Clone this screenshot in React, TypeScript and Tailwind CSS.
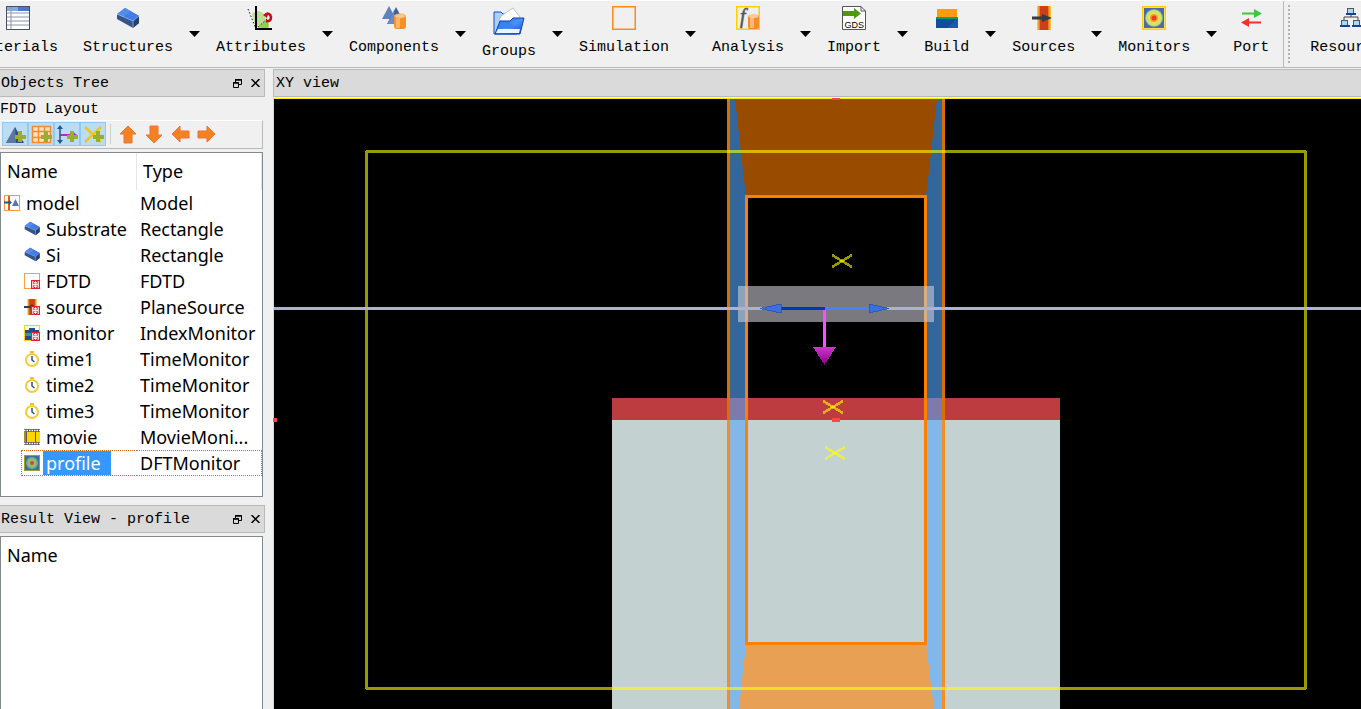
import { useState, type ReactNode } from 'react'

const mono = "font-['Liberation_Mono','Noto_Sans_CJK_SC',monospace] text-[15px] leading-5"
const sans = "font-['Noto_Sans','Noto_Sans_CJK_SC',sans-serif] text-[18px] leading-6"

function BlockShape() {
  return (
    <>
      <path d="M1 8 L9 1 L23 9 L23 16 L17 21 L1 12Z" fill="#35548c" />
      <path d="M1 7 L9 1 L23 9 L17 14Z" fill="#3f7de8" />
      <path d="M1 7 L9 1 L15 4 L7 10Z" fill="#6a9cf0" opacity="0.5" />
      <path d="M17 14 L23 9 L23 16 L17 21Z" fill="#24406f" />
      <path d="M1 7 L17 14 L17 21 M17 14 L23 9" fill="none" stroke="#a9c3ee" strokeWidth="0.7" />
    </>
  )
}

function MaterialsIcon() {
  return (
    <svg width="24" height="24" viewBox="0 0 24 24">
      <rect x="0.5" y="0.5" width="23" height="23" fill="#fff" stroke="#4b5058" />
      <rect x="1" y="1" width="22" height="4" fill="#4a78d0" />
      <rect x="1" y="1" width="11" height="4" fill="#9dbdf3" opacity="0.7" />
      <path d="M1 7h22M1 11h22M1 15h22M1 19h22" stroke="#c6cad6" strokeWidth="2" />
      <path d="M5 1v22" stroke="#8d949f" strokeWidth="1" />
    </svg>
  )
}

function StructuresIcon() {
  return <svg width="24" height="24" viewBox="0 0 24 22"><BlockShape /></svg>
}

function AttributesIcon() {
  return (
    <svg width="24" height="24" viewBox="0 0 24 24" className="overflow-visible">
      <path d="M3 8 Q9 2 15 8 L19 21 H7Z" fill="#bfdc95" />
      <path d="M8 23 L18 13 Q21 18 19 23Z" fill="#8fd04f" />
      <path d="M-1 3 L7 23 L19 12" fill="none" stroke="#111" strokeWidth="1" strokeDasharray="1.5 2" />
      <path d="M7 0V23H23" fill="none" stroke="#000" strokeWidth="2" />
      <path d="M16 9 Q21 6 22 11 Q22 16 17 15" fill="none" stroke="#c80f18" strokeWidth="2.6" />
      <path d="M14 9 L19 6 L18 12Z" fill="#c80f18" />
    </svg>
  )
}

function ComponentsIcon() {
  return (
    <svg width="24" height="24" viewBox="0 0 24 24">
      <path d="M0 13 L7 0 L14 13Z" fill="#5d82bd" />
      <path d="M5 18 L14 1 L23 18Z" fill="#3e619b" />
      <path d="M5 18 L12 5 L14 18Z" fill="#6a8cc5" />
      <rect x="12" y="9" width="12" height="14" rx="3" fill="#f8902a" />
      <rect x="14" y="10" width="4" height="12" fill="#ffb56a" />
      <ellipse cx="18" cy="10" rx="5.5" ry="2.2" fill="#ffc98f" stroke="#f59a40" strokeWidth="0.6" />
    </svg>
  )
}

function GroupsIcon() {
  return (
    <svg width="32" height="32" viewBox="0 0 32 32" className="overflow-visible">
      <defs>
        <linearGradient id="folder" x1="0" y1="0" x2="1" y2="1">
          <stop offset="0" stopColor="#1b5fe0" />
          <stop offset="0.5" stopColor="#4d93f5" />
          <stop offset="1" stopColor="#0d4bcb" />
        </linearGradient>
      </defs>
      <path d="M1 32 V10 H8 L10 12 H24 V32Z" fill="#a9d2fb" stroke="#0f50cc" />
      <path d="M6 19 L8 14 L20 6 L27 15 L24 20Z" fill="#fff" stroke="#a9b1c4" strokeWidth="0.8" />
      <path d="M2 32 L7 19 H17 L20 16 H31 L27 32Z" fill="url(#folder)" stroke="#0a42b8" />
      <path d="M7 20 H17 L22 25 L6 27Z" fill="#3a82f2" />
      <path d="M5 27 H27 L26 31 H3Z" fill="#eef4ff" />
    </svg>
  )
}

function SimulationIcon() {
  return <svg width="24" height="24"><rect x="0.75" y="0.75" width="22.5" height="22.5" fill="none" stroke="#ff8a1c" strokeWidth="1.5" /></svg>
}

function AnalysisIcon() {
  return (
    <svg width="24" height="24" viewBox="0 0 24 24">
      <rect x="0.75" y="0.75" width="22.5" height="22.5" fill="#eeeeea" stroke="#ffd000" strokeWidth="1.5" />
      <text x="4" y="17" fontFamily="Liberation Serif, serif" fontStyle="italic" fontSize="20" fill="#555" stroke="#555" strokeWidth="0.5">f</text>
      <rect x="12" y="9" width="11" height="14" rx="2" fill="#f68b2c" />
      <rect x="14" y="10" width="4" height="12" fill="#ffb878" />
      <ellipse cx="17.5" cy="10" rx="5" ry="2" fill="#ffc796" />
    </svg>
  )
}

function ImportIcon() {
  return (
    <svg width="24" height="24" viewBox="0 0 24 24">
      <path d="M0.5 0.5H19L23.5 5V23.5H0.5Z" fill="#fff" stroke="#555" />
      <path d="M19 0.5V5H23.5" fill="none" stroke="#555" />
      <path d="M1 5H12V2L19 7.5L12 13V10H1Z" fill="#4e9a06" />
      <text x="2.5" y="22" fontFamily="Liberation Sans, sans-serif" fontSize="9" fill="#000">GDS</text>
    </svg>
  )
}

function BuildIcon() {
  return (
    <svg width="24" height="24" viewBox="0 0 24 24">
      <rect x="2" y="3" width="20" height="9" fill="#fd9d0a" />
      <rect x="1" y="12" width="22" height="10" fill="#104c9f" />
      <path d="M23 12V22H12Z" fill="#2a63b2" opacity="0.6" />
      <rect x="1" y="11" width="22" height="2" fill="#109a76" />
    </svg>
  )
}

function SourceShape() {
  return (
    <>
      <rect x="5" y="0" width="14" height="24" fill="#f9c531" />
      <rect x="6.5" y="0" width="11" height="24" fill="#ef7b22" />
      <rect x="8" y="0" width="8" height="24" fill="#cf3f16" />
      <path d="M0 10.5H10V8L20 12L10 16V13.5H0Z" fill="#333b42" />
    </>
  )
}

function SourcesIcon() {
  return <svg width="24" height="24" viewBox="0 0 24 24"><SourceShape /></svg>
}

function MonitorsIcon() {
  return (
    <svg width="24" height="24" viewBox="0 0 24 24">
      <rect x="0.75" y="0.75" width="22.5" height="22.5" fill="#fff2b0" stroke="#ffcc00" strokeWidth="1.5" />
      <rect x="2" y="2" width="20" height="20" fill="#5068a8" />
      <circle cx="12" cy="12" r="9" fill="#78b8a0" />
      <circle cx="12" cy="12" r="8" fill="#cfe36a" />
      <circle cx="12" cy="12" r="5" fill="#f4e04a" />
      <circle cx="12" cy="12" r="4" fill="#f89b2c" />
      <circle cx="12" cy="12" r="2.5" fill="#e8401c" />
    </svg>
  )
}

function PortIcon() {
  return (
    <svg width="24" height="24" viewBox="0 0 24 24">
      <path d="M3 6.5H15V3L23 7.5L15 12V8.5H3Z" fill="#3fc63f" />
      <path d="M22 15.5H10V12L2 16.5L10 21V17.5H22Z" fill="#fb2c2c" />
    </svg>
  )
}

function ResourcesIcon() {
  return (
    <svg width="24" height="24" viewBox="0 0 24 24" className="overflow-visible">
      <path d="M12 8V11M5 14V11H19V14" fill="none" stroke="#444" />
      <rect x="8.5" y="2.5" width="6" height="5" fill="#a9d8fb" stroke="#555" />
      <rect x="7" y="7" width="10" height="2" fill="#15438f" />
      <rect x="2.5" y="14.5" width="6" height="5" fill="#a9d8fb" stroke="#555" />
      <rect x="1" y="19" width="10" height="2" fill="#15438f" />
      <rect x="14.5" y="14.5" width="6" height="5" fill="#a9d8fb" stroke="#555" />
      <rect x="13" y="19" width="10" height="2" fill="#15438f" />
    </svg>
  )
}

const tools = [
  { label: 'Structures', icon: <StructuresIcon /> },
  { label: 'Attributes', icon: <AttributesIcon /> },
  { label: 'Components', icon: <ComponentsIcon /> },
  { label: 'Groups', icon: <GroupsIcon /> },
  { label: 'Simulation', icon: <SimulationIcon /> },
  { label: 'Analysis', icon: <AnalysisIcon /> },
  { label: 'Import', icon: <ImportIcon /> },
  { label: 'Build', icon: <BuildIcon /> },
  { label: 'Sources', icon: <SourcesIcon /> },
  { label: 'Monitors', icon: <MonitorsIcon /> },
]

function ToolButton({ label, icon }: { label: string; icon: ReactNode }) {
  return (
    <button className="flex flex-col items-center justify-center gap-2 px-3 pb-1">
      {icon}
      <span>{label}</span>
    </button>
  )
}

function MainToolbar() {
  return (
    <header className={`${mono} flex h-[68px] overflow-hidden border-t border-b border-t-white border-b-[#b9b9b9] bg-[#f0f0f0]`}>
      <div className="-ml-[35px] flex shrink-0 border-r border-[#b9b9b9] pr-0.5">
        <div className="mr-px flex">
          <ToolButton label="Materials" icon={<MaterialsIcon />} />
        </div>
        {tools.map((tool) => (
          <div key={tool.label} className="flex">
            <ToolButton label={tool.label} icon={tool.icon} />
            <button aria-label={`${tool.label} menu`} className="flex w-[19px] items-center justify-center">
              <svg width="11" height="6"><path d="M0 0H11L5.5 6Z" fill="#000" /></svg>
            </button>
          </div>
        ))}
        <ToolButton label="Port" icon={<PortIcon />} />
      </div>
      <div className="flex shrink-0">
        <div className="my-1 ml-1 w-0 border-l-2 border-dotted border-[#b4b4b4]" />
        <div className="flex pl-2">
          <ToolButton label="Resources" icon={<ResourcesIcon />} />
        </div>
      </div>
    </header>
  )
}

function DockTitle({ title }: { title: string }) {
  return (
    <div className={`${mono} flex h-7 items-center border border-l-0 border-[#b9b9b9] bg-[#dadada] pl-px`}>
      <h2 className="flex-1 pt-0.5 whitespace-pre">{title}</h2>
      <button aria-label={`Float ${title}`} className="flex w-[18px] justify-center">
        <svg width="9" height="9" viewBox="0 0 9 9">
          <path d="M2.5 3V0.5H8.5V5.5H6" fill="none" stroke="#000" />
          <path d="M0.5 3.5H5.5V8.5H0.5Z" fill="none" stroke="#000" />
          <path d="M2 1H9M0 4H6" stroke="#000" strokeWidth="1.5" />
        </svg>
      </button>
      <button aria-label={`Close ${title}`} className="flex w-[18px] justify-center">
        <svg width="9" height="8" viewBox="0 0 9 8"><path d="M0.5 0L8.5 8M8.5 0L0.5 8" stroke="#000" strokeWidth="1.5" /></svg>
      </button>
    </div>
  )
}

function Plus() {
  return <path d="M17 8V19M12 14H23" stroke="#9aae2e" strokeWidth="4" />
}

const filters = [
  {
    label: 'Show structures',
    icon: <><path d="M3 20L12 4L21 20Z" fill="#34507c" /><path d="M3 20L12 4L13 20Z" fill="#5878a8" /></>,
  },
  {
    label: 'Show simulation',
    icon: (
      <>
        <rect x="3" y="3" width="18" height="16" fill="#ffe2bd" />
        <path d="M3.5 3.5H21.5V19.5H3.5ZM9.5 3V20M15.5 3V20M3 8.5H22M3 14.5H22" fill="none" stroke="#f58a2a" strokeWidth="1.5" />
      </>
    ),
  },
  {
    label: 'Show sources',
    icon: (
      <>
        <path d="M5 4V20M5 12H8" stroke="#28568c" strokeWidth="1.5" />
        <path d="M2 6L5 2L8 6ZM2 17L5 21L8 17Z" fill="#28568c" />
        <path d="M6 12H20" stroke="#c020d0" strokeWidth="2" />
        <path d="M17 8L22 12L17 16Z" fill="#c020d0" />
      </>
    ),
  },
  { label: 'Show monitors', icon: <path d="M4 4L20 19M20 4L4 19" stroke="#ecc71c" strokeWidth="2.5" /> },
]

const moves = [
  { label: 'Move up', path: 'M9 1L17 9H13V18H5V9H1Z' },
  { label: 'Move down', path: 'M9 18L17 10H13V1H5V10H1Z' },
  { label: 'Move left', path: 'M1 9L9 1V6H18V13H9V17Z' },
  { label: 'Move right', path: 'M18 9L10 1V6H1V13H10V17Z' },
]

function TreeToolbar() {
  return (
    <div className="mr-0.5 flex h-[29px] items-start border-t border-r border-b border-t-white border-r-[#b9b9b9] border-b-[#b9b9b9] pt-px pl-0.5">
      {filters.map((f) => (
        <button key={f.label} aria-label={f.label} aria-pressed="true" className="flex h-6 w-[26px] items-center justify-center border border-[#90c8f6] bg-[#bbdcf3]">
          <svg width="24" height="22" viewBox="0 0 24 22">{f.icon}<Plus /></svg>
        </button>
      ))}
      <div className="mx-1 mt-0.5 h-5 w-px bg-[#cfcfcf]" />
      {moves.map((m) => (
        <button key={m.label} aria-label={m.label} className="flex h-6 w-[26px] items-center justify-center">
          <svg width="19" height="19"><path d={m.path} fill="#f58220" stroke="#f2703c" strokeLinejoin="round" /></svg>
        </button>
      ))}
    </div>
  )
}

function RedBadge() {
  return (
    <g>
      <rect x="7" y="7" width="9" height="9" fill="#e4202c" />
      <path d="M9.5 8.5H8.5V14.5H9.5M13.5 8.5H14.5V14.5H13.5M11.5 8V15M9 11.5H14M10 9.5H13V13.5H10Z" fill="none" stroke="#fff" strokeWidth="0.8" />
    </g>
  )
}

const iconShapes: Record<string, ReactNode> = {
  model: (
    <>
      <rect x="0.5" y="0.5" width="15" height="15" fill="#fff" stroke="#f9964a" />
      <rect x="4" y="1" width="2" height="14" fill="#e85a1c" />
      <path d="M0 7.5H6" stroke="#1f5a80" strokeWidth="2" />
      <path d="M5 5L8 7.5L5 10Z" fill="#1f5a80" />
      <path d="M8 11L11.5 4L15 11Z" fill="#5278b8" />
    </>
  ),
  block: <g transform="scale(0.68)"><BlockShape /></g>,
  fdtd: <><rect x="0.5" y="0.5" width="15" height="15" fill="#fff" stroke="#ff9c48" /><RedBadge /></>,
  source: <><g transform="scale(0.67)"><SourceShape /></g><RedBadge /></>,
  index: (
    <>
      <rect x="0.5" y="0.5" width="15" height="15" fill="#fff8d8" stroke="#ffd21c" />
      <path d="M1 5H5V3H11V5H15V8H1Z" fill="#234d8c" />
      <rect x="1" y="8" width="14" height="3" fill="#2aa08c" />
      <rect x="1" y="11" width="14" height="4" fill="#234d8c" />
      <RedBadge />
    </>
  ),
  time: (
    <>
      <rect x="6" y="0" width="4" height="2" fill="#f0c22c" />
      <circle cx="8" cy="9" r="6" fill="#fff" stroke="#f5cb38" strokeWidth="2" />
      <path d="M8 5V9L10.5 11" fill="none" stroke="#35506f" strokeWidth="1.5" />
    </>
  ),
  movie: (
    <>
      <rect x="0" y="0" width="16" height="16" fill="#5d5a55" />
      <path d="M0 1.5H16M0 14.5H16" stroke="#fff" strokeWidth="1.5" strokeDasharray="1.5 1" />
      <rect x="3" y="3" width="8" height="10" fill="#ffd500" />
      <rect x="12" y="3" width="4" height="10" fill="#ffd500" />
      <rect x="0" y="3" width="2" height="10" fill="#a38c2c" />
    </>
  ),
  profile: (
    <>
      <rect x="0.5" y="0.5" width="15" height="15" fill="#3c6ea4" stroke="#a09c3c" />
      <circle cx="8" cy="8" r="6" fill="#6cae90" />
      <circle cx="8" cy="8" r="4.5" fill="#94bb78" />
      <circle cx="8" cy="8" r="2" fill="#cc4c34" />
    </>
  ),
}

const rows = [
  { name: 'model', type: 'Model', icon: 'model' },
  { name: 'Substrate', type: 'Rectangle', icon: 'block' },
  { name: 'Si', type: 'Rectangle', icon: 'block' },
  { name: 'FDTD', type: 'FDTD', icon: 'fdtd' },
  { name: 'source', type: 'PlaneSource', icon: 'source' },
  { name: 'monitor', type: 'IndexMonitor', icon: 'index' },
  { name: 'time1', type: 'TimeMonitor', icon: 'time' },
  { name: 'time2', type: 'TimeMonitor', icon: 'time' },
  { name: 'time3', type: 'TimeMonitor', icon: 'time' },
  { name: 'movie', type: 'MovieMoni...', icon: 'movie' },
  { name: 'profile', type: 'DFTMonitor', icon: 'profile' },
]

function ObjectsTree({ selected, onSelect }: { selected: string; onSelect: (name: string) => void }) {
  return (
    <div className={`${sans} mt-[3px] mr-0.5 h-[345px] overflow-hidden border border-[#828790] bg-white`}>
      <table className="w-full table-fixed border-separate border-spacing-0 text-left">
        <thead>
          <tr className="h-[37px]">
            <th className="w-[136px] border-r border-[#e5e5e5] p-0 pb-0.5 pl-1.5 font-normal">Name</th>
            <th className="border-r border-[#e5e5e5] p-0 pb-0.5 pl-1.5 font-normal">Type</th>
          </tr>
        </thead>
        <tbody>
          {rows.map((row, i) => {
            const active = row.name === selected
            const line = active ? 'border-[#d0701c]' : 'border-transparent'
            return (
              <tr key={row.name} onClick={() => onSelect(row.name)}>
                <td className={i === 0 ? 'p-0' : 'p-0 pl-5'}>
                  <div className={`${line} flex h-[26px] items-center border border-r-0 border-dotted pl-0.5`}>
                    <svg width="16" height="16" viewBox="0 0 16 16" className="shrink-0">{iconShapes[row.icon]}</svg>
                    <span className={`${active ? 'bg-[#3399ff] pr-2.5 text-white' : ''} ml-[3px] pl-[3px]`}>{row.name}</span>
                  </div>
                </td>
                <td className="p-0">
                  <div className={`${line} h-[26px] border border-l-0 border-dotted pl-[3px]`}>{row.type}</div>
                </td>
              </tr>
            )
          })}
        </tbody>
      </table>
    </div>
  )
}

function Cross({ x, y }: { x: number; y: number }) {
  return (
    <g stroke="#ffff00" strokeOpacity="0.6" strokeWidth="2.5">
      <path d={`M${x - 10} ${y - 6}L${x + 10} ${y + 6}`} />
      <path d={`M${x - 10} ${y + 6}L${x + 10} ${y - 6}`} />
    </g>
  )
}

function LayoutView() {
  return (
    <svg className="block h-full w-full bg-black" viewBox="273 98 1088 611" preserveAspectRatio="xMidYMin slice" role="img" aria-label="XY layout" shapeRendering="crispEdges">
      <defs>
        <linearGradient id="down" x1="0" y1="0" x2="0" y2="1">
          <stop offset="0" stopColor="#cc38cc" />
          <stop offset="1" stopColor="#850085" />
        </linearGradient>
      </defs>
      {/* substrate and silicon layer */}
      <rect x="612" y="420" width="448" height="289" fill="#c4d1d1" />
      <rect x="612" y="398" width="448" height="22" fill="#bc3c40" />

      {/* simulation boundaries */}
      <path d="M730 99H942V398H730Z" fill="#33679b" />
      <path d="M730 398H942V420H730Z" fill="#7f7aad" />
      <path d="M730 420H942V709H730Z" fill="#82b7ea" />
      <path d="M735 99H937L926 197H746Z" fill="#994c00" />
      <path d="M746 644H926L934 709H739Z" fill="#e8a055" />
      <rect x="746" y="197" width="180" height="201" fill="#000" />
      <rect x="746" y="398" width="180" height="22" fill="#bc3c40" />
      <rect x="746" y="420" width="180" height="223" fill="#c4d1d1" />
      <path d="M728.5 99V709M943.5 99V709" stroke="#d97000" strokeWidth="3" />
      <path d="M728.5 420V709M943.5 420V709" stroke="#f68c24" strokeWidth="3" />
      <rect x="746.5" y="196.5" width="179" height="447" fill="none" stroke="#ff8000" strokeWidth="3" />

      {/* monitor region */}
      <rect x="366.5" y="151.5" width="939" height="537" rx="1" fill="none" stroke="#ffff00" strokeOpacity="0.6" strokeWidth="3" />
      <Cross x={842} y={261} />
      <Cross x={833} y={407} />
      <Cross x={835} y={453} />

      {/* plane source */}
      <rect x="738" y="286" width="196" height="36" fill="#cacad4" fillOpacity="0.6" />
      <rect x="274" y="307" width="1087" height="3" fill="#b0b0cf" />
      <rect x="781" y="307" width="44" height="3" fill="#0038b0" />
      <rect x="825" y="307" width="44" height="3" fill="#4a80ff" />
      <path d="M760 308.5L781 304V313Z" fill="#3f6fdc" stroke="#2450b8" strokeWidth="0.8" />
      <path d="M889 308.5L869 304V313Z" fill="#3f6fdc" stroke="#2450b8" strokeWidth="0.8" />
      <rect x="823" y="310" width="3" height="38" fill="#ff4cff" />
      <path d="M813 347H836L824.5 365Z" fill="url(#down)" />

      <rect x="273" y="98" width="1088" height="1" fill="#f2f200" />
      <rect x="273" y="98" width="1" height="611" fill="#f2f200" />
      <rect x="832" y="98" width="8" height="2" fill="#ff4444" />
      <rect x="832" y="418" width="8" height="4" fill="#ff4444" />
      <rect x="273" y="418" width="4" height="4" fill="#ff4444" />
    </svg>
  )
}

export default function App() {
  const [selected, setSelected] = useState('profile')

  return (
    <div className="flex h-screen flex-col overflow-hidden bg-[#f0f0f0] text-black">
      <MainToolbar />
      <div className="flex min-h-0 flex-1 gap-2 pt-px">
        <aside className="flex w-[265px] shrink-0 flex-col">
          <DockTitle title="Objects Tree" />
          <p className={`${mono} pt-[3px]`}>FDTD Layout</p>
          <TreeToolbar />
          <ObjectsTree selected={selected} onSelect={setSelected} />
          <div className="mt-2">
            <DockTitle title={`Result View - ${selected}`} />
          </div>
          <div className={`${sans} mt-[3px] mr-0.5 flex-1 border border-b-0 border-[#828790] bg-white px-1.5 py-1.5`}>Name</div>
        </aside>
        <main className="flex min-w-0 flex-1 flex-col">
          <h2 className={`${mono} flex h-7 shrink-0 items-center border border-r-0 border-[#b9b9b9] bg-[#dadada] pt-0.5 pl-0.5`}>XY view</h2>
          <div className="mt-px min-h-0 flex-1">
            <LayoutView />
          </div>
        </main>
      </div>
    </div>
  )
}
